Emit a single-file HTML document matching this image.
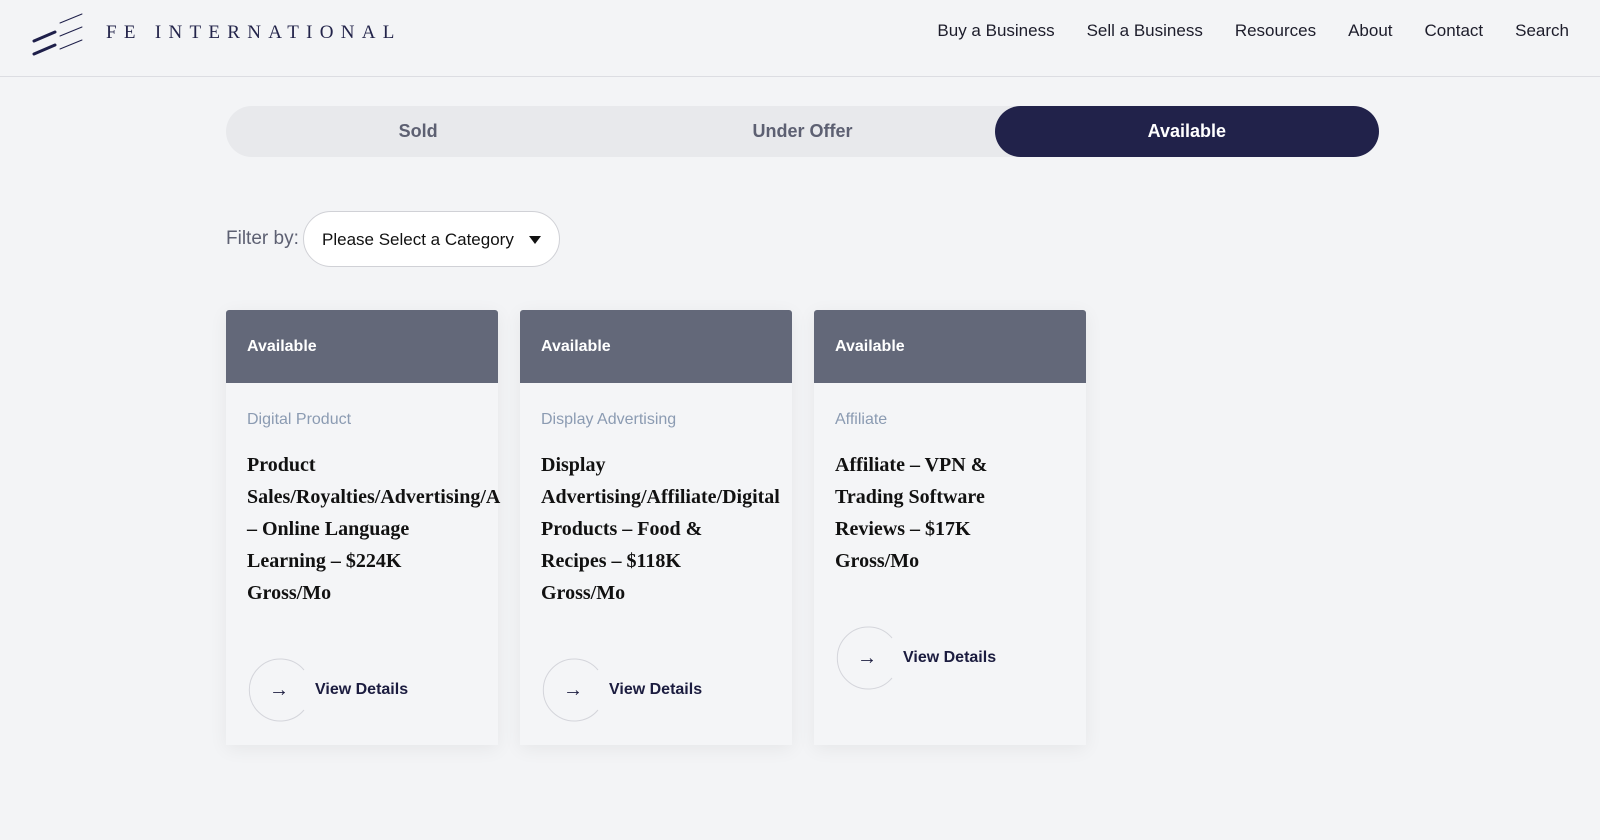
<!DOCTYPE html>
<html><head><style>
*{margin:0;padding:0;box-sizing:border-box}
body{width:1600px;height:840px;background:#f3f4f6;font-family:"Liberation Sans",sans-serif;overflow:hidden;position:relative}
.hdr{height:77px;border-bottom:1px solid #dcdde2;position:relative}
.logo{position:absolute;left:106px;top:22px;font-family:"Liberation Serif",serif;font-size:19px;letter-spacing:7.3px;color:#23244a}
nav{position:absolute;right:31px;top:21px;display:flex;gap:32px;font-size:17px;color:#1d1d2b}
.tabs{position:absolute;left:226px;top:106px;width:1153px;height:51px;background:#e8e9ec;border-radius:26px;display:flex;font-weight:bold;font-size:18px;color:#5d6072}
.tabs div{flex:1;text-align:center;line-height:51px}
.tabs .on{background:#21224a;color:#fff;border-radius:26px}
.filt{position:absolute;left:226px;top:228px;font-size:19px;color:#5d6072}
.sel{position:absolute;left:303px;top:211px;width:257px;height:56px;border:1px solid #d0d1d6;border-radius:28px;background:#fff;font-size:17px;color:#111;padding:18px 0 0 18px}
.sel:after{content:"";position:absolute;right:18px;top:24px;border:6px solid transparent;border-top:8px solid #111;border-bottom:0}
.card{position:absolute;top:310px;width:272px;height:435px;background:#f4f5f7;box-shadow:0 4px 18px rgba(0,0,0,.06)}
.card .top{height:73px;background:#636879;color:#fff;font-weight:bold;font-size:16px;padding:28px 0 0 21px;border-radius:3px 3px 0 0}
.cat{position:absolute;left:21px;top:101px;color:#8b9bb2;font-size:16px}
.ttl{position:absolute;left:21px;top:139px;font-family:"Liberation Serif",serif;font-weight:bold;font-size:20px;line-height:32px;color:#111;width:300px;white-space:nowrap}
.vd{position:absolute;left:21px;display:flex;align-items:center}
.vd span{font-weight:bold;font-size:16px;color:#1b1c3f;margin-left:4px}
</style></head><body>
<div class="hdr">
<svg style="position:absolute;left:32px;top:12px" width="52" height="44"><g stroke="#1e1f4a" stroke-linecap="round"><line x1="2" y1="29" x2="23" y2="20" stroke-width="3"/><line x1="2" y1="42" x2="23" y2="33" stroke-width="3"/><line x1="28" y1="11" x2="50" y2="2" stroke-width="1"/><line x1="28" y1="24" x2="50" y2="15" stroke-width="1"/><line x1="28" y1="37" x2="50" y2="28" stroke-width="1"/></g></svg>
<div class="logo">FE INTERNATIONAL</div>
<nav><span>Buy a Business</span><span>Sell a Business</span><span>Resources</span><span>About</span><span>Contact</span><span>Search</span></nav>
</div>
<div class="tabs"><div>Sold</div><div>Under Offer</div><div class="on">Available</div></div>
<div class="filt">Filter by:</div>
<div class="sel">Please Select a Category</div>

<div class="card" style="left:226px"><div class="top">Available</div><div class="cat">Digital Product</div>
<div class="ttl">Product<br>Sales/Royalties/Advertising/A<br>– Online Language<br>Learning – $224K<br>Gross/Mo</div>
<div class="vd" style="top:348px"><svg width="64" height="64"><path d="M57 12 A31 31 0 1 0 57 52" fill="none" stroke="#d4d5db"/><text x="22" y="38" font-size="20" fill="#1b1c3f">→</text></svg><span>View Details</span></div></div>

<div class="card" style="left:520px"><div class="top">Available</div><div class="cat">Display Advertising</div>
<div class="ttl">Display<br>Advertising/Affiliate/Digital<br>Products – Food &amp;<br>Recipes – $118K<br>Gross/Mo</div>
<div class="vd" style="top:348px"><svg width="64" height="64"><path d="M57 12 A31 31 0 1 0 57 52" fill="none" stroke="#d4d5db"/><text x="22" y="38" font-size="20" fill="#1b1c3f">→</text></svg><span>View Details</span></div></div>

<div class="card" style="left:814px"><div class="top">Available</div><div class="cat">Affiliate</div>
<div class="ttl">Affiliate – VPN &amp;<br>Trading Software<br>Reviews – $17K<br>Gross/Mo</div>
<div class="vd" style="top:316px"><svg width="64" height="64"><path d="M57 12 A31 31 0 1 0 57 52" fill="none" stroke="#d4d5db"/><text x="22" y="38" font-size="20" fill="#1b1c3f">→</text></svg><span>View Details</span></div></div>
</body></html>
